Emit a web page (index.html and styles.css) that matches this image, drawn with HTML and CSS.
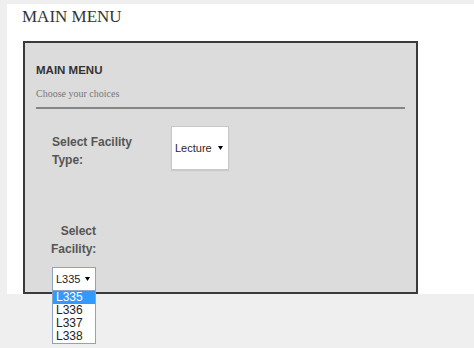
FILE: index.html
```html
<!DOCTYPE html>
<html lang="en">
<head>
  <meta charset="UTF-8">
  <meta name="viewport" content="width=device-width, initial-scale=1.0">
  <title>Main Menu</title>
  <link rel="stylesheet" href="styles.css">
</head>

<body>
  <div class="page">
    <h1 class="page-title">MAIN MENU</h1>

    <!-- Menu box -->
    <div class="menu-box">
      <h2 class="menu-title">MAIN MENU</h2>
      <p class="menu-sub">Choose your choices</p>
      <div class="menu-rule"></div>

      <div class="type-row">
        <span class="field-label type-label">Select Facility Type:</span>
        <div class="select select-type">
          <span>Lecture</span>
          <svg class="arrow" width="5" height="4" viewBox="0 0 5 4"><polygon points="0,0 5,0 2.5,4" fill="#000"/></svg>
        </div>
      </div>

      <div class="facility-col">
        <span class="field-label facility-label">Select Facility:</span>
        <div class="select-wrap">
          <div class="select select-facility">
            <span>L335</span>
            <svg class="arrow" width="5" height="4" viewBox="0 0 5 4"><polygon points="0,0 5,0 2.5,4" fill="#000"/></svg>
          </div>
          <ul class="options">
            <li class="selected">L335</li>
            <li>L336</li>
            <li>L337</li>
            <li>L338</li>
          </ul>
        </div>
      </div>
    </div>
  </div>
</body>
</html>
```

FILE: styles.css
```css
body {
  margin: 0;
  background-color: #efefef;
  font-family: "Liberation Sans", Arial, sans-serif;
  height: 348px;
  overflow: hidden;
}

.page {
  background: white;
  margin: 4px 0 0 7px;
  padding: 3px 0 0 15px;
}

.page-title {
  margin: 0;
  font-family: "Liberation Serif", "Times New Roman", serif;
  font-weight: normal;
  font-size: 17px;
  line-height: 20px;
  color: #333;
}

.menu-box {
  box-sizing: border-box;
  width: 395px;
  margin: 14px 0 0 1px;
  padding: 20px 11px 1px 11px;
  background: #dcdcdc;
  border: 2px solid #3a3a3a;
}

.menu-title {
  margin: 0;
  font-size: 11.5px;
  line-height: 14px;
  font-weight: bold;
  color: #333;
}

.menu-sub {
  margin: 11px 0 0 0;
  font-family: "Liberation Serif", "Times New Roman", serif;
  font-size: 10px;
  line-height: 12px;
  color: #777;
}

.menu-rule {
  margin-top: 7px;
  height: 2px;
  background: #858585;
}

.field-label {
  font-size: 12px;
  font-weight: bold;
  line-height: 18px;
  color: #555;
}

.type-row {
  display: flex;
  align-items: flex-start;
  margin-top: 17px;
}

.type-label {
  width: 100px;
  margin: 7px 19px 0 16px;
}

.select {
  box-sizing: border-box;
  display: flex;
  align-items: center;
  justify-content: space-between;
  background: white;
  font-size: 11px;
  color: #2e2633;
}

.select-type {
  width: 58px;
  height: 44px;
  padding: 0 5px 0 3px;
  border: 1px solid #c8c8c8;
  box-shadow: 0 1px 1px rgba(0, 0, 0, 0.08);
}

.facility-col {
  display: flex;
  flex-direction: column;
  align-items: flex-start;
  margin-top: 52px;
}

.facility-label {
  width: 45px;
  margin-left: 15px;
  text-align: right;
}

.select-wrap {
  position: relative;
  margin: 9px 0 0 16px;
}

.select-facility {
  width: 44px;
  height: 24px;
  padding: 0 5px 0 3px;
  border: 1px solid #8ba3c7;
  color: #222;
}

.options {
  position: absolute;
  top: 100%;
  left: 0;
  box-sizing: border-box;
  width: 44px;
  margin: 0;
  padding: 0;
  list-style: none;
  background: white;
  border: 1px solid #8ba3c7;
  border-top: none;
  font-size: 12px;
  line-height: 13px;
  color: #222;
}

.options li {
  padding-left: 3px;
}

.options .selected {
  background: #3399ff;
  color: white;
}
```
